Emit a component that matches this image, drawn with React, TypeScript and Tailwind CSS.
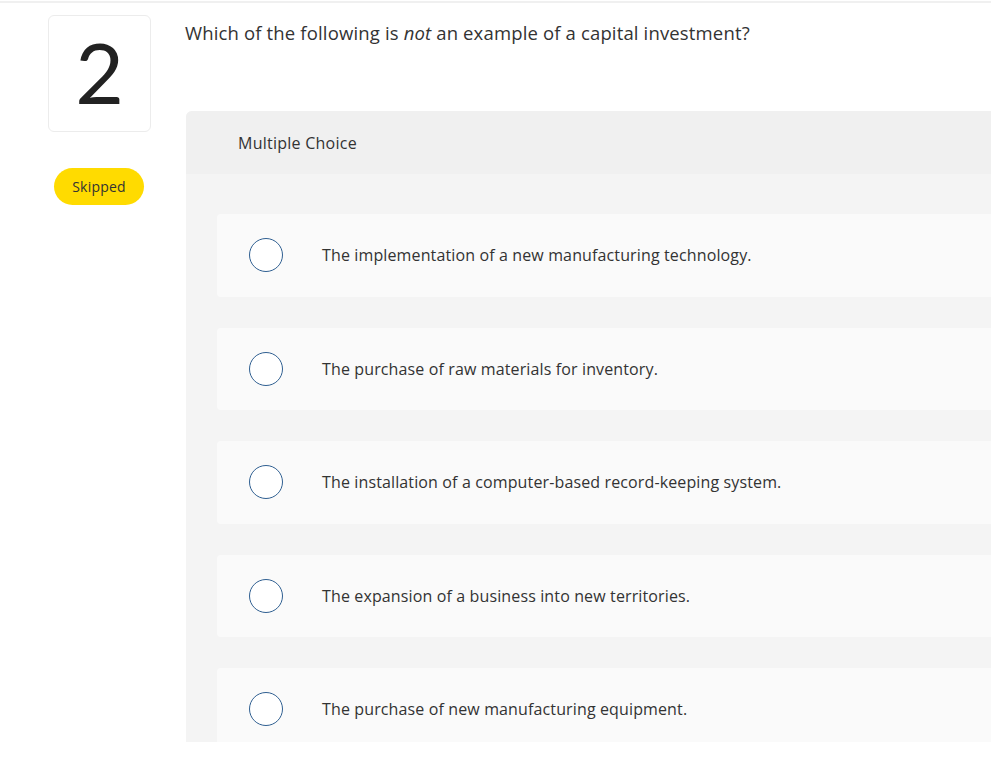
import React from "react";

const options = [
  "The implementation of a new manufacturing technology.",
  "The purchase of raw materials for inventory.",
  "The installation of a computer-based record-keeping system.",
  "The expansion of a business into new territories.",
  "The purchase of new manufacturing equipment.",
];

export default function App() {
  return (
    <div
      className="w-[991px] h-[758px] bg-white overflow-hidden text-[#333]"
      style={{ fontFamily: "'Open Sans', Lato, sans-serif" }}
    >
      <div className="pt-[1px]">
        <div className="h-[2px] bg-[#f0f0f0]" />
      </div>
      <div className="flex">
        <div className="w-[185px] shrink-0 flex flex-col">
          <div className="ml-[48px] mt-[12px] w-[103px] h-[117px] border border-[#ececec] rounded-[6px] flex items-center justify-center">
            <span className="text-[84px] leading-none text-[#222] -mt-[4px]" style={{ fontFamily: "Lato, sans-serif" }}>2</span>
          </div>
          <div className="ml-[54px] mt-[36px] w-[90px] h-[37px] rounded-full bg-[#ffdb00] flex items-center justify-center text-[14px] tracking-[0.2px] text-[#333]">
            Skipped
          </div>
        </div>
        <div className="flex-1 flex flex-col">
          <div className="pt-[17px] h-[108px] text-[18.5px] tracking-[0.15px] leading-[26px] text-[#333]">
            Which of the following is <em>not</em> an example of a capital investment?
          </div>
          <div className="ml-[1px] h-[631px] overflow-hidden rounded-tl-[6px] bg-[#f4f4f4]">
            <div className="h-[63px] bg-[#f0f0f0] flex items-center pl-[52px] text-[16px] tracking-[0.25px] text-[#333]">
              Multiple Choice
            </div>
            <div className="pt-[40px] pl-[31px] flex flex-col gap-[31px]">
              {options.map((o) => (
                <div
                  key={o}
                  className="h-[82.5px] bg-[#fafafa] rounded-l-[4px] flex items-center pl-[32px]"
                >
                  <div className="w-[34px] h-[34px] rounded-full border-[1.75px] border-[#2f5f91] bg-white shrink-0" />
                  <span className="ml-[39px] text-[16px] tracking-[0.13px] text-[#333]">{o}</span>
                </div>
              ))}
            </div>
          </div>
        </div>
      </div>
    </div>
  );
}
